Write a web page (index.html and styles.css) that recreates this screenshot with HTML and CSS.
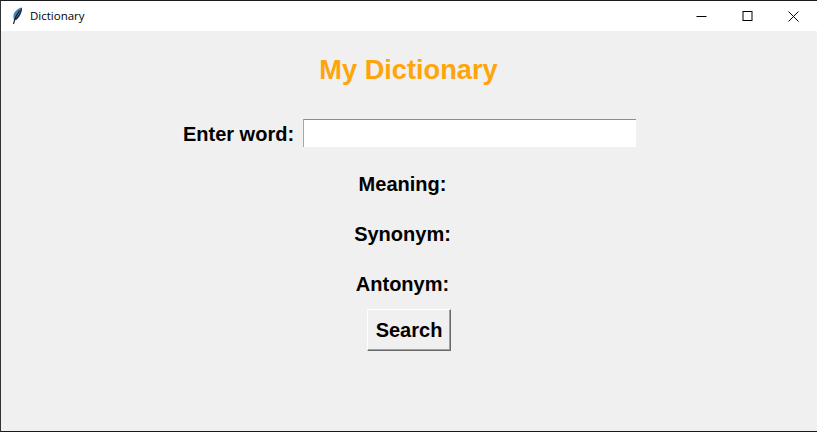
FILE: index.html
```html
<!DOCTYPE html>
<html lang="en">
<head>
    <meta charset="UTF-8">
    <meta name="viewport" content="width=device-width, initial-scale=1.0">
    <title>Dictionary</title>
    <link rel="stylesheet" href="styles.css">
</head>
<body>
    <div class="window">
        <div class="titlebar">
            <svg class="app-icon" width="12" height="18" viewBox="0 0 12 18">
                <path d="M11 0.500C7.500 1 3.500 4 2.500 8C2.200 10 2.500 11.500 3 13L5.500 12.500C8.500 10.500 11 6.500 11 0.500Z" fill="#4a7fb5"/>
                <path d="M10.500 1.500C10 5 7.500 9.500 5 12.500M8.500 3.500C6.500 6.500 4.500 10 3.500 13.500L2.500 17" fill="none" stroke="#10161c" stroke-width="1.100"/>
            </svg>
            <span class="window-title">Dictionary</span>
            <div class="controls">
                <div class="control">
                    <svg width="11" height="11" viewBox="0 0 11 11"><path d="M0.500 5.500H10.500" stroke="#000" fill="none"/></svg>
                </div>
                <div class="control">
                    <svg width="11" height="11" viewBox="0 0 11 11"><rect x="1" y="0.500" width="9" height="9" stroke="#000" fill="none"/></svg>
                </div>
                <div class="control">
                    <svg width="11" height="11" viewBox="0 0 11 11"><path d="M0.500 0.500L10.500 10.500M10.500 0.500L0.500 10.500" stroke="#000" fill="none"/></svg>
                </div>
            </div>
        </div>
        <div class="content">
            <div class="heading">My Dictionary</div>
            <div class="word-row">
                <label class="label" for="word">Enter word:</label>
                <input class="entry" id="word" type="text">
            </div>
            <div class="label result">Meaning:</div>
            <div class="label result">Synonym:</div>
            <div class="label result">Antonym:</div>
            <button class="button">Search</button>
        </div>
    </div>
</body>
</html>
```
FILE: styles.css
```css
html, body {
    margin: 0;
    height: 100%;
    overflow: hidden;
}
body {
    font-family: "Liberation Sans", Arial, sans-serif;
    background-color: #f0f0f0;
}
.window {
    box-sizing: border-box;
    height: 432px;
    display: flex;
    flex-direction: column;
    border-top: 1px solid #1a1a1a;
    border-bottom: 1px solid #1a1a1a;
    border-left: 1px solid #333;
}
.titlebar {
    height: 30px;
    display: flex;
    align-items: center;
    background-color: #fff;
    padding-left: 10px;
    flex-shrink: 0;
}
.app-icon {
    margin-right: 7px;
}
.window-title {
    font-family: "Open Sans", "Liberation Sans", sans-serif;
    font-size: 11.500px;
    color: #000;
    padding-bottom: 2px;
}
.controls {
    display: flex;
    margin-left: auto;
    padding-right: 1px;
}
.control {
    width: 46px;
    height: 30px;
    display: flex;
    align-items: center;
    justify-content: center;
}
.content {
    flex: 1;
    display: flex;
    flex-direction: column;
    align-items: center;
}
.heading {
    font-size: 27.200px;
    font-weight: bold;
    color: #ffa50a;
    line-height: 32px;
    margin-top: 23px;
    padding-right: 1px;
}
.word-row {
    display: flex;
    align-items: center;
    margin-top: 33px;
    padding-left: 1px;
}
.label {
    font-size: 20px;
    font-weight: bold;
    color: #000;
    line-height: 28px;
}
.word-row .label {
    margin-top: 1px;
    margin-bottom: -1px;
}
.entry {
    box-sizing: border-box;
    width: 333px;
    height: 28px;
    margin-left: 9px;
    padding: 0;
    background-color: #fff;
    border: none;
    border-top: 1px solid #8c8c8c;
    border-left: 1px solid #a8a8a8;
    outline: none;
}
.result {
    margin-top: 22px;
    padding-right: 13px;
}
.word-row + .result {
    margin-top: 23px;
}
.button {
    box-sizing: border-box;
    width: 84px;
    height: 42px;
    margin-top: 11px;
    padding: 1px 0 0 0;
    font-family: inherit;
    font-size: 20px;
    font-weight: bold;
    color: #000;
    background-color: #f0f0f0;
    border: 1px solid #fff;
    border-right-color: #696969;
    border-bottom-color: #696969;
    box-shadow: inset -1px -1px 0 #a0a0a0;
}
```
